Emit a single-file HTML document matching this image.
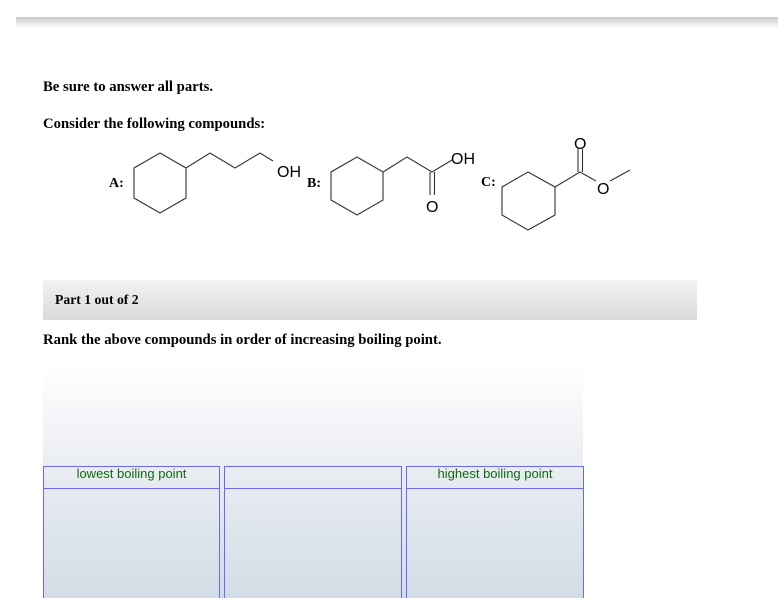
<!DOCTYPE html>
<html style="margin:0;width:778px;height:598px;overflow:hidden"><head><style>
body{margin:0;width:778px;height:598px;background:#fff;position:relative;overflow:hidden;font-family:"Liberation Serif",serif;}
.t{position:absolute;font-weight:bold;font-size:14.7px;color:#000;white-space:nowrap}
.band{position:absolute;left:16px;top:17px;width:762px;height:11px;background:linear-gradient(#c8c8c8,#fff)}
.part{position:absolute;left:43px;top:280px;width:654px;height:40px;background:linear-gradient(#f2f2f2,#dadada)}
.panel{position:absolute;left:43px;top:366px;width:540px;height:232px;background:linear-gradient(#fff,#ebeef3 40%,#d3dce6)}
.box{position:absolute;border:1px solid #6a6af0;box-sizing:border-box}
.lab{font-family:"Liberation Sans",sans-serif;font-size:13px;color:#0a6e0a;text-align:center;line-height:14px}
</style></head><body>
<div class="band"></div>
<div class="t" style="left:43px;top:79px">Be sure to answer all parts.</div>
<div class="t" style="left:43px;top:116px">Consider the following compounds:</div>
<svg style="position:absolute;left:0;top:0" width="778" height="260" font-family="Liberation Sans, sans-serif" font-size="16">
<g fill="none" stroke="#333" stroke-width="1.1">
<polygon points="160,153 186,168 186,198 160,213 134,198 134,168"/>
<polyline points="186,168 210,153 235,168 260,153 273,161"/>
<polygon points="357,157 383,172 383,200 357,215 331,200 331,172"/>
<polyline points="383,172 407,157 432,172 452,160"/>
<line x1="430" y1="172" x2="430" y2="195"/><line x1="434.5" y1="172" x2="434.5" y2="195"/>
<polygon points="528,172 555,187 555,215 528,230 502,215 502,187"/>
<polyline points="555,187 580,172 596,181"/>
<line x1="578" y1="172" x2="578" y2="149"/><line x1="582.5" y1="172" x2="582.5" y2="149"/>
<line x1="610" y1="181" x2="630" y2="170"/>
</g>
<g fill="#000">
<text x="277" y="177">OH</text>
<text x="451" y="164">OH</text>
<text x="426" y="212">O</text>
<text x="574" y="149">O</text>
<text x="597" y="194">O</text>
</g>
<g font-family="Liberation Serif, serif" font-weight="bold" font-size="14">
<text x="109" y="187">A:</text><text x="307" y="187">B:</text><text x="481" y="186">C:</text>
</g>
</svg>
<div class="part"></div>
<div class="t" style="left:55px;top:292px;font-size:13.7px">Part 1 out of 2</div>
<div class="t" style="left:43px;top:332px">Rank the above compounds in order of increasing boiling point.</div>
<div class="panel"></div>
<div class="box lab" style="left:43px;top:466px;width:177px;height:23px">lowest boiling point</div>
<div class="box" style="left:224px;top:466px;width:178px;height:23px"></div>
<div class="box lab" style="left:406px;top:466px;width:178px;height:23px">highest boiling point</div>
<div class="box" style="left:43px;top:488px;width:177px;height:115px"></div>
<div class="box" style="left:224px;top:488px;width:178px;height:115px"></div>
<div class="box" style="left:406px;top:488px;width:178px;height:115px"></div>
</body></html>
